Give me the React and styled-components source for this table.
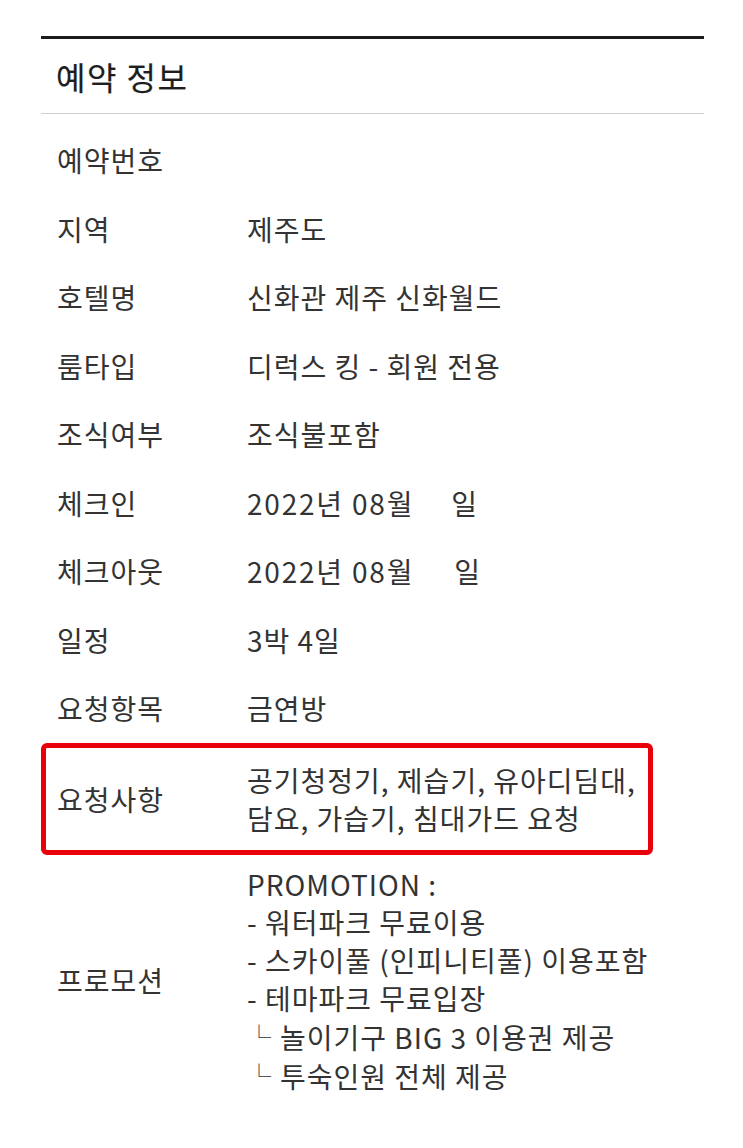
import React from "react";
import styled, { createGlobalStyle } from "styled-components";

const GlobalStyle = createGlobalStyle`
  body {
    margin: 0;
    background: #fff;
    font-family: "Noto Sans CJK KR", "Noto Sans", sans-serif;
    color: #333;
  }
`;

const Page = styled.div`
  padding: 36px 39px 40px 41px;
`;

const Section = styled.section`
  border-top: 3px solid #1c1c1c;
`;

const Title = styled.h2`
  margin: 0;
  height: 74px;
  display: flex;
  align-items: center;
  padding-left: 15px;
  font-size: 32px;
  font-weight: 400;
  color: #1e1e1e;
  letter-spacing: 1.5px;
  -webkit-text-stroke: 0.2px #1e1e1e;
  border-bottom: 1px solid #cfcfcf;
`;

const List = styled.div`
  display: flex;
  flex-direction: column;
  padding-top: 12px;
`;

const Row = styled.div`
  display: grid;
  grid-template-columns: ${(p) => p.$cols || "206px"} 1fr;
  align-items: center;
  min-height: ${(p) => (p.$tall ? "auto" : "68.5px")};
  padding: ${(p) => p.$pad || "0"};
  font-size: 28px;
  line-height: 38px;
  letter-spacing: 1px;
`;

const Highlight = styled(Row)`
  width: 612px;
  box-sizing: border-box;
  border: 5px solid #e8000b;
  border-radius: 6px;
  padding: 13px 0;
`;

const Label = styled.div`
  padding-left: ${(p) => (p.$inset ? "11px" : "16px")};
  color: #333;
`;

const Value = styled.div`
  color: #333;
`;

const Digits = styled.span`
  letter-spacing: 1.8px;
`;

const Gap = styled.span`
  display: inline-block;
  width: ${(p) => p.$w}px;
`;

const Sub = styled.div`
  padding-left: 0;
`;

const Corner = styled.span`
  display: inline-block;
  font-size: 24px;
  color: #555;
  margin-right: 8px;
  vertical-align: 3px;
`;

const rows = [
  ["예약번호", ""],
  ["지역", "제주도"],
  ["호텔명", "신화관 제주 신화월드"],
  ["룸타입", "디럭스 킹 - 회원 전용"],
  ["조식여부", "조식불포함"],
];

export default function App() {
  return (
    <>
      <GlobalStyle />
      <Page>
        <Section>
          <Title>예약 정보</Title>
          <List>
            {rows.map(([k, v]) => (
              <Row key={k}>
                <Label>{k}</Label>
                <Value>{v}</Value>
              </Row>
            ))}
            <Row>
              <Label>체크인</Label>
              <Value><Digits>2022년 08월</Digits><Gap $w={37} />일</Value>
            </Row>
            <Row>
              <Label>체크아웃</Label>
              <Value><Digits>2022년 08월</Digits><Gap $w={40} />일</Value>
            </Row>
            <Row>
              <Label>일정</Label>
              <Value>3박 4일</Value>
            </Row>
            <Row>
              <Label>요청항목</Label>
              <Value>금연방</Value>
            </Row>
            <Highlight $tall $cols="201px">
              <Label $inset>요청사항</Label>
              <Value>
                공기청정기, 제습기, 유아디딤대,
                <br />
                담요, 가습기, 침대가드 요청
              </Value>
            </Highlight>
            <Row $tall $pad="10px 0 0">
              <Label>프로모션</Label>
              <Value>
                <div>PROMOTION :</div>
                <div>- 워터파크 무료이용</div>
                <div>- 스카이풀 (인피니티풀) 이용포함</div>
                <div>- 테마파크 무료입장</div>
                <Sub><Corner>└</Corner>놀이기구 BIG 3 이용권 제공</Sub>
                <Sub><Corner>└</Corner>투숙인원 전체 제공</Sub>
              </Value>
            </Row>
          </List>
        </Section>
      </Page>
    </>
  );
}
